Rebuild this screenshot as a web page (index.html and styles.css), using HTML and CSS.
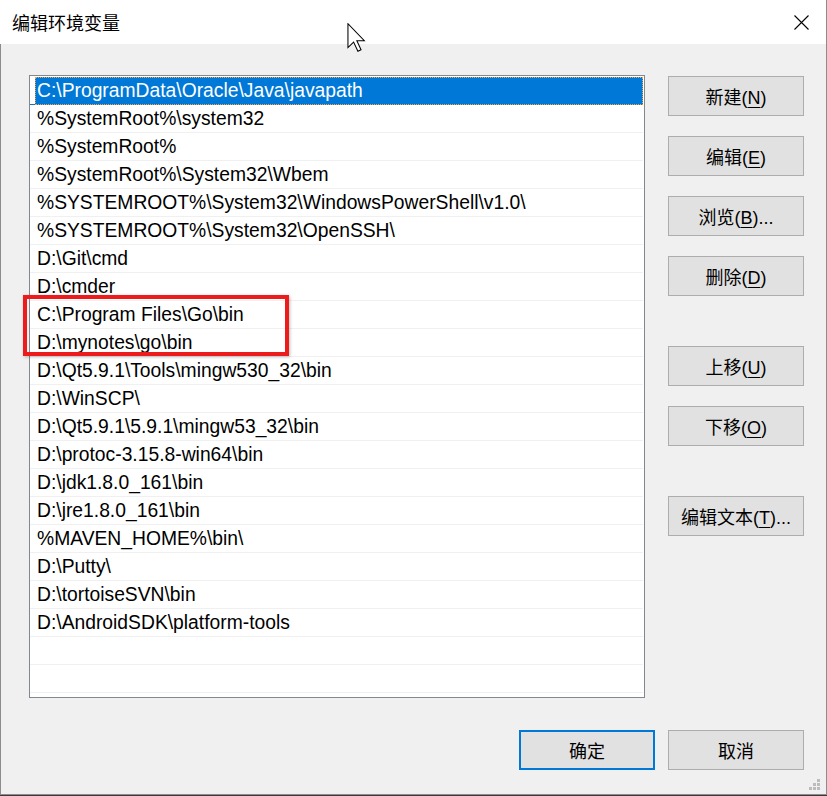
FILE: index.html
```html
<!DOCTYPE html>
<html lang="zh-CN">
<head>
    <meta charset="UTF-8">
    <meta name="viewport" content="width=device-width, initial-scale=1.0">
    <title>编辑环境变量</title>
    <link rel="stylesheet" href="styles.css">
</head>
<body>
    <div class="window">
        <div class="titlebar">
            <span class="title">编辑环境变量</span>
            <span class="close">
                <svg width="15" height="15" viewBox="0 0 15 15">
                    <path d="M0.5 0.5 L14.5 14.5 M14.5 0.5 L0.5 14.5" stroke="#000" stroke-width="1.1" fill="none"/>
                </svg>
            </span>
        </div>

        <div class="content">
            <div class="main">
                <ul class="path-list">
                    <li class="selected"><span>C:\ProgramData\Oracle\Java\javapath</span></li>
                    <li><span>%SystemRoot%\system32</span></li>
                    <li><span>%SystemRoot%</span></li>
                    <li><span>%SystemRoot%\System32\Wbem</span></li>
                    <li><span>%SYSTEMROOT%\System32\WindowsPowerShell\v1.0\</span></li>
                    <li><span>%SYSTEMROOT%\System32\OpenSSH\</span></li>
                    <li><span>D:\Git\cmd</span></li>
                    <li><span>D:\cmder</span></li>
                    <li><span>C:\Program Files\Go\bin</span></li>
                    <li><span>D:\mynotes\go\bin</span></li>
                    <li><span>D:\Qt5.9.1\Tools\mingw530_32\bin</span></li>
                    <li><span>D:\WinSCP\</span></li>
                    <li><span>D:\Qt5.9.1\5.9.1\mingw53_32\bin</span></li>
                    <li><span>D:\protoc-3.15.8-win64\bin</span></li>
                    <li><span>D:\jdk1.8.0_161\bin</span></li>
                    <li><span>D:\jre1.8.0_161\bin</span></li>
                    <li><span>%MAVEN_HOME%\bin\</span></li>
                    <li><span>D:\Putty\</span></li>
                    <li><span>D:\tortoiseSVN\bin</span></li>
                    <li><span>D:\AndroidSDK\platform-tools</span></li>
                    <li><span></span></li>
                    <li><span></span></li>
                    <li><span></span></li>
                </ul>

                <div class="side-buttons">
                    <button class="btn">新建(<u>N</u>)</button>
                    <button class="btn">编辑(<u>E</u>)</button>
                    <button class="btn">浏览(<u>B</u>)...</button>
                    <button class="btn">删除(<u>D</u>)</button>
                    <button class="btn group-start">上移(<u>U</u>)</button>
                    <button class="btn">下移(<u>O</u>)</button>
                    <button class="btn group-start">编辑文本(<u>T</u>)...</button>
                </div>
            </div>

            <div class="footer">
                <button class="btn default">确定</button>
                <button class="btn">取消</button>
            </div>
        </div>

        <!-- 标注框 -->
        <div class="highlight"></div>

        <!-- 鼠标指针 -->
        <svg class="cursor" width="19" height="29" viewBox="0 0 12.5 19.5">
            <path d="M0.5 0.5 L0.5 16.5 L4.3 12.8 L7.2 19 L9.3 18 L6.5 11.9 L11.5 11.9 Z" fill="#fff" stroke="#000" stroke-width="0.7" stroke-linejoin="miter"/>
        </svg>

        <!-- 调整大小手柄 -->
        <svg class="grip" width="12" height="12" viewBox="0 0 12 12">
            <rect x="8" y="0" width="3" height="3" fill="#bcbcbc"/>
            <rect x="4" y="4" width="3" height="3" fill="#bcbcbc"/>
            <rect x="8" y="4" width="3" height="3" fill="#bcbcbc"/>
            <rect x="0" y="8" width="3" height="3" fill="#bcbcbc"/>
            <rect x="4" y="8" width="3" height="3" fill="#bcbcbc"/>
            <rect x="8" y="8" width="3" height="3" fill="#bcbcbc"/>
        </svg>
    </div>
</body>
</html>
```

FILE: styles.css
```css
* {
    box-sizing: border-box;
}

body {
    margin: 0;
    background: #3a3a3a;
    font-family: "Liberation Sans", "Noto Sans CJK SC", sans-serif;
    color: #000;
}

.window {
    position: relative;
    width: 827px;
    height: 795px;
    background: #f0f0f0;
    border-right: 1px solid #8c8c8c;
    border-bottom: 1px solid #8c8c8c;
    overflow: hidden;
}

.titlebar {
    height: 44px;
    background: #fff;
    display: flex;
    align-items: center;
    justify-content: space-between;
    padding-left: 12px;
    padding-right: 17px;
}

.title {
    font-family: "Noto Sans CJK SC", sans-serif;
    font-size: 18px;
    color: #000;
}

.close {
    display: flex;
    margin-top: 1px;
}

.content {
    height: 750px;
    border-left: 1px solid #8c8c8c;
    padding: 31px 22px 0 28px;
}

.main {
    display: flex;
    gap: 23px;
}

.path-list {
    width: 616px;
    height: 623px;
    margin: 0;
    padding: 1px 0 0;
    list-style: none;
    background: #fff;
    border: 1px solid #828790;
    overflow: hidden;
}

.path-list li {
    height: 28px;
    border-bottom: 1px solid #f0f0f0;
    margin-right: 1px;
}

.path-list li span {
    display: block;
    height: 27px;
    margin-left: 5px;
    padding-left: 2px;
    font-size: 19.3px;
    line-height: 28px;
    white-space: nowrap;
}

.path-list li.selected {
    border-bottom-color: #0078d7;
}

.path-list li.selected span {
    height: 28px;
    background: #0078d7;
    color: #fff;
    outline: 1px dotted #f4a838;
    outline-offset: -1px;
}

.side-buttons {
    display: flex;
    flex-direction: column;
    gap: 20px;
    margin-top: 1px;
}

.side-buttons .group-start {
    margin-top: 30px;
}

.btn {
    width: 136px;
    height: 40px;
    padding: 0;
    background: #e1e1e1;
    border: 1px solid #adadad;
    font-family: "Liberation Sans", "Noto Sans CJK SC", sans-serif;
    font-size: 18px;
    color: #000;
    cursor: pointer;
}

.btn u {
    text-decoration-thickness: 1px;
    text-underline-offset: 3px;
}

.btn:hover {
    background: #e5f1fb;
    border-color: #0078d7;
}

.btn.default {
    border: 2px solid #0078d7;
}

.footer {
    display: flex;
    justify-content: flex-end;
    gap: 13px;
    margin-top: 32px;
}

.highlight {
    position: absolute;
    left: 23px;
    top: 295px;
    width: 266px;
    height: 61px;
    border: 4px solid #ec1c1c;
    box-shadow: 1px 1px 3px rgba(0, 0, 0, 0.25);
    pointer-events: none;
}

.cursor {
    position: absolute;
    left: 347px;
    top: 23px;
    pointer-events: none;
}

.grip {
    position: absolute;
    right: 5px;
    bottom: 3px;
}
```
